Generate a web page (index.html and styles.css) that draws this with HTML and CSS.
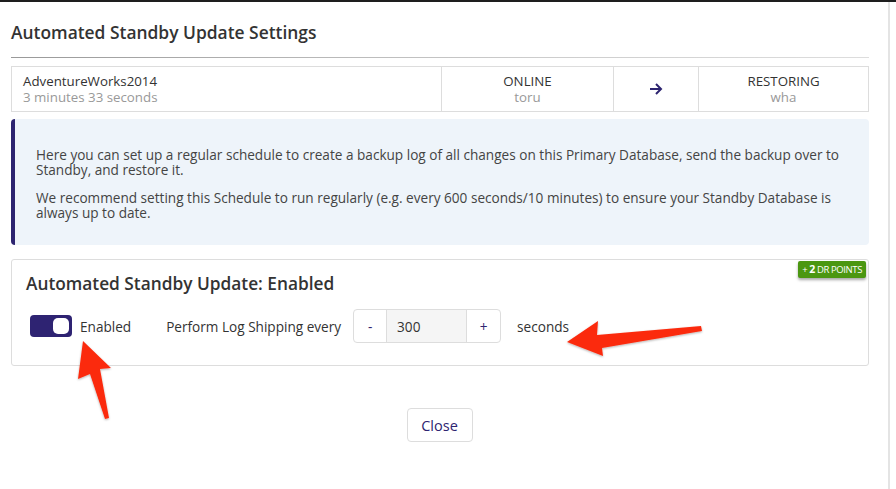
FILE: index.html
```html
<!DOCTYPE html>
<html>
<head>
<meta charset="utf-8">
<link rel="stylesheet" href="styles.css">
</head>
<body>
<div class="frame">
  <div class="modal">
    <h1 class="title">Automated Standby Update Settings</h1>
    <div class="rule"></div>
    <div class="dbtable">
      <div class="cell c-name">
        <div class="main">AdventureWorks2014</div>
        <div class="sub">3 minutes 33 seconds</div>
      </div>
      <div class="cell c-center c-src">
        <div class="main">ONLINE</div>
        <div class="sub">toru</div>
      </div>
      <div class="cell c-center c-arrow">
        <svg width="14" height="12" viewBox="0 0 14 12"><path d="M1 6h11M7 1l5 5-5 5" fill="none" stroke="#2d2470" stroke-width="2"/></svg>
      </div>
      <div class="cell c-center c-dst">
        <div class="main">RESTORING</div>
        <div class="sub">wha</div>
      </div>
    </div>
    <div class="info">
      <p>Here you can set up a regular schedule to create a backup log of all changes on this Primary Database, send the backup over to Standby, and restore it.</p>
      <p>We recommend setting this Schedule to run regularly (e.g. every 600 seconds/10 minutes) to ensure your Standby Database is always up to date.</p>
    </div>
    <div class="panel">
      <span class="badge">+ <b>2</b> DR POINTS</span>
      <h2 class="ptitle">Automated Standby Update: Enabled</h2>
      <div class="row">
        <span class="toggle"><span class="knob"></span></span>
        <span class="lbl">Enabled</span>
        <span class="lbl every">Perform Log Shipping every</span>
        <div class="group">
          <span class="gbtn">-</span>
          <span class="ginput">300</span>
          <span class="gbtn plus">+</span>
        </div>
        <span class="lbl">seconds</span>
      </div>
    </div>
    <div class="footer">
      <button class="close">Close</button>
    </div>
  </div>
  <svg class="annot" width="896" height="489" viewBox="0 0 896 489">
    <defs>
      <filter id="sh" x="-20%" y="-20%" width="140%" height="140%"><feDropShadow dx="0" dy="1" stdDeviation="1.2" flood-color="#000" flood-opacity="0.3"/></filter>
    </defs>
    <path filter="url(#sh)" fill="#fb2c10" d="M83 341 L111 368 L100 369 L109 418 L105 419 L90 374 L78 379 Z"/>
    <path filter="url(#sh)" fill="#fb2c10" d="M567 342 L598 321 L597 335 L701 326 L702 331 L602 348 L603 356 Z"/>
  </svg>
</div>
</body>
</html>
```

FILE: styles.css
```css
* { box-sizing: border-box; }
html, body { margin: 0; padding: 0; background: #fff; }
body { font-family: "Open Sans", "Lato", sans-serif; color: #333; }
.frame {
  position: relative;
  width: 896px;
  height: 489px;
  border-top: 2px solid #1e1e1e;
  overflow: hidden;
}
.modal {
  width: 890px;
  height: 487px;
  border-right: 2px solid #e4e4e4;
  padding: 0 19px 0 11px;
}
.title {
  margin: 0;
  padding-top: 19px;
  height: 55px;
  font-size: 17.4px;
  font-weight: 600;
  color: #333;
  line-height: 22px;
}
.rule {
  height: 1px;
  background: linear-gradient(to right, #999, #ccc 60%, #ddd);
  margin-bottom: 8px;
}
.dbtable {
  display: grid;
  grid-template-columns: 429px 172px 85px 1fr;
  border: 1px solid #ddd;
  height: 46px;
}
.cell {
  border-left: 1px solid #ddd;
  padding: 6px 11px;
  font-size: 13.3px;
  line-height: 16px;
}
.cell:first-child { border-left: none; }
.c-center { text-align: center; }
.c-arrow { display: flex; align-items: center; justify-content: center; padding: 0; }
.main { color: #333; }
.sub { color: #999; }
.info {
  margin-top: 7px;
  background: #eef4fa;
  border-left: 4px solid #2d2470;
  border-radius: 4px;
  height: 126px;
  padding: 28px 20px 0 21px;
  font-size: 13.6px;
  line-height: 15px;
  color: #444;
}
.info p { margin: 0 0 13px; }
.panel {
  position: relative;
  margin-top: 14px;
  border: 1px solid #ddd;
  border-radius: 3px;
  height: 107px;
  padding: 13px 14px 0 14px;
}
.badge {
  position: absolute;
  top: 1px;
  right: 2px;
  background: #4b9711;
  color: #fff;
  font-size: 9.5px;
  line-height: 12px;
  padding: 2px 4px;
  border-radius: 2px;
  box-shadow: 0 2px 3px rgba(0,0,0,0.35);
  letter-spacing: -0.4px;
}
.badge b { font-size: 10.5px; }
.ptitle {
  margin: 0;
  font-size: 17.3px;
  font-weight: 600;
  color: #333;
  line-height: 22px;
}
.row {
  display: flex;
  align-items: center;
  margin-top: 14px;
  margin-left: 4px;
  font-size: 13.6px;
  color: #333;
}
.toggle {
  width: 42px;
  height: 22px;
  background: #2e2372;
  border-radius: 4px;
  display: flex;
  align-items: center;
  justify-content: flex-end;
  padding-right: 3px;
}
.knob {
  width: 16px;
  height: 16px;
  background: #fff;
  border-radius: 5px;
}
.lbl { margin-left: 8px; }
.every { margin-left: 35px; }
.group {
  display: flex;
  height: 34px;
  border: 1px solid #ddd;
  border-radius: 4px;
  margin-left: 12px;
  margin-right: 8px;
  overflow: hidden;
}
.gbtn {
  width: 32px;
  display: flex;
  align-items: center;
  justify-content: center;
  color: #2d2470;
}
.gbtn.plus { width: 33px; }
.ginput {
  width: 81px;
  background: #f5f5f5;
  border-left: 1px solid #ddd;
  border-right: 1px solid #ddd;
  display: flex;
  align-items: center;
  padding-left: 10px;
  font-size: 13.6px;
}
.footer {
  display: flex;
  justify-content: center;
  margin-top: 42px;
}
.close {
  width: 66px;
  height: 34px;
  background: #fff;
  border: 1px solid #ddd;
  border-radius: 4px;
  font-family: inherit;
  font-size: 14.5px;
  color: #2d2470;
  margin-right: 1px;
}
.annot { position: absolute; left: 0; top: -2px; pointer-events: none; }
```
